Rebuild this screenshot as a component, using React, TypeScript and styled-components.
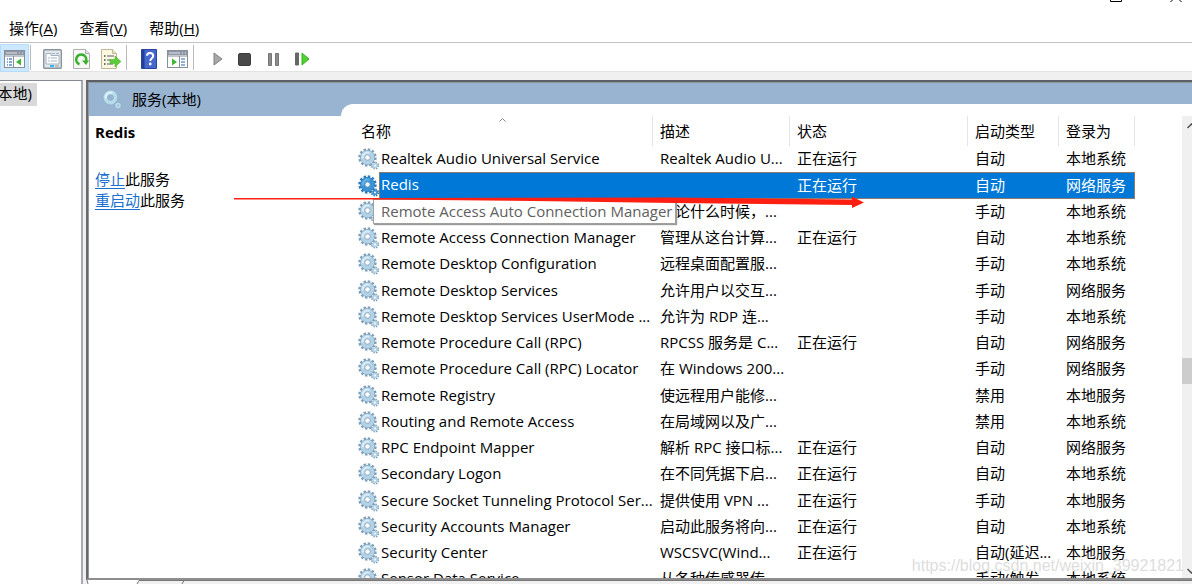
import React from "react";
import styled, { createGlobalStyle, css } from "styled-components";

const GlobalStyle = createGlobalStyle`
  * { box-sizing: border-box; }
  body {
    margin: 0;
    background: #fff;
    color: #000;
    font: 15px/20px "Open Sans", "Noto Sans CJK SC", sans-serif;
  }
  button { font: inherit; color: inherit; }
`;

const Window = styled.div`
  position: relative;
  display: flex;
  flex-direction: column;
  height: 100vh;
  overflow: hidden;
`;

const TitleBar = styled.header`
  display: flex;
  justify-content: flex-end;
  gap: 48px;
  height: 16px;
  padding-right: 10px;
  flex: none;
`;

const CaptionButton = styled.button`
  display: flex;
  padding: 0;
  border: 0;
  background: none;
  height: 3px;
`;

const MenuBar = styled.nav`
  display: flex;
  gap: 22px;
  height: 26px;
  padding: 0 9px 2px;
  flex: none;
`;

const MenuButton = styled.button`
  padding: 0;
  border: 0;
  background: none;
  white-space: nowrap;
`;

const Toolbar = styled.div`
  display: flex;
  flex: none;
  height: 30px;
  padding-top: 1px;
  border-top: 1px solid #c3c4c8;
  border-bottom: 1px solid #e3e3e3;
`;

const ToolButton = styled.button<{ $active?: boolean }>`
  display: flex;
  align-items: center;
  justify-content: center;
  width: 29px;
  height: 28px;
  padding: 2px 0 0;
  border: 1px solid ${(p) => (p.$active ? "#b5dcfa" : "transparent")};
  background: ${(p) => (p.$active ? "#cce8ff" : "transparent")};
`;

const Separator = styled.span`
  width: 1px;
  height: 25px;
  margin: 1px 7px 0 1px;
  background: #b9b9b9;
`;

const Body = styled.div`
  display: flex;
  flex: 1;
  min-height: 0;
  padding-top: 8px;
  background: #f0f0f0;
`;

const TreePane = styled.aside`
  flex: none;
  width: 83px;
  border-top: 1px solid #828790;
  border-right: 2px solid #a5aab3;
  background: #fff;
`;

const TreeNode = styled.div`
  width: 37px;
  height: 23px;
  margin-top: 2px;
  padding: 0 5px 0 0;
  background: #d9d9d9;
  display: flex;
  justify-content: flex-end;
  white-space: nowrap;
  overflow: hidden;
`;

const Main = styled.main`
  display: flex;
  flex-direction: column;
  flex: 1;
  min-width: 0;
  margin-left: 3px;
`;

const ResultPane = styled.div`
  display: flex;
  flex: 1;
  min-height: 0;
  border: solid #696969;
  border-width: 2px 0 2px 2px;
  border-top-color: #5c5f63;
  border-bottom-color: #8e8e8e;
  box-shadow: inset 1px 1px 0 #8f979f;
  padding: 1px 0 0 1px;
  background-color: #99b4d1;
`;

const DetailColumn = styled.section`
  display: flex;
  flex-direction: column;
  flex: none;
  width: 252px;
`;

const PaneTitle = styled.h1`
  display: flex;
  align-items: center;
  gap: 10px;
  height: 33px;
  margin: 0;
  padding: 0 0 2px 12px;
  font-size: 15px;
  font-weight: 400;
`;

const Details = styled.div`
  flex: 1;
  padding: 6px;
  background: #fff;
`;

const ServiceName = styled.h2`
  margin: 0 0 27px;
  font-size: 15px;
  line-height: 20px;
  font-weight: 700;
`;

const Action = styled.p`
  margin: 0;
  line-height: 21px;
  a { color: #1a6fd0; text-underline-offset: 3px; }
`;

const ListColumn = styled.section`
  display: flex;
  flex: 1;
  min-width: 0;
  margin-top: 21px;
  padding: 12px 0 0 12px;
  border-top-left-radius: 12px;
  background: #fff;
  overflow: hidden;
`;

const ListView = styled.div`
  flex: 1;
  min-width: 0;
  overflow: hidden;
`;

const Table = styled.table`
  width: 782px;
  table-layout: fixed;
  border-collapse: separate;
  border-spacing: 0;
  white-space: nowrap;
`;

const HeaderCell = styled.th`
  position: relative;
  height: 30px;
  padding: 0 0 0 7px;
  border-right: 1px solid #e5e5e5;
  font-weight: 400;
  text-align: left;
  &:first-child { padding-left: 8px; }
`;

const SortMark = styled.svg`
  position: absolute;
  top: 2px;
  left: calc(50% - 4px);
`;

const selectedFill = css`
  background: #0078d7;
  color: #fff;
  border: solid #8c7b6c;
  border-width: 1px 0;
`;

const Row = styled.tr`
  height: 26px;
  &:nth-child(4n + 2) { height: 27px; }
`;

const Cell = styled.td<{ $selected?: boolean }>`
  padding: 0 0 2px 7px;
  overflow: hidden;
  ${(p) => p.$selected && selectedFill}
  &:last-child { border-right-width: ${(p) => (p.$selected ? "1px" : "0")}; }
`;

const NameCell = styled.td`
  padding: 0 0 0 5px;
  overflow: hidden;
`;

const NameLine = styled.div`
  display: flex;
  align-items: center;
  height: 26px;
`;

const NameLabel = styled.span<{ $selected?: boolean }>`
  flex: 1;
  height: 100%;
  padding-left: 2px;
  line-height: 24px;
  ${(p) => p.$selected && selectedFill}
  ${(p) => p.$selected && css`
    height: 27px;
    line-height: 23px;
    padding-left: 1px;
    border-left-width: 1px;
  `}
`;

const ScrollBar = styled.div`
  display: flex;
  flex-direction: column;
  flex: none;
  width: 10px;
  background: #f0f0f0;
  overflow: hidden;
`;

const ScrollButton = styled.button`
  display: flex;
  height: 17px;
  padding: 7px 0 0 5px;
  border: 0;
  background: none;
`;

const ScrollTrack = styled.div`
  display: flex;
  flex-direction: column;
  flex: 1;
  &::before { content: ""; flex: 224; }
  &::after { content: ""; flex: 177; }
`;

const ScrollThumb = styled.div`
  height: 26px;
  background: #cdcdcd;
`;

const BottomTabs = styled.svg`
  display: block;
  flex: none;
  width: 100%;
  height: 4px;
`;

const Tooltip = styled.div`
  position: absolute;
  left: 373px;
  top: 199px;
  height: 25px;
  padding: 0 3px 0 7px;
  border: 1px solid #a0a0a0;
  background: #fff;
  box-shadow: 1px 1px 1px #9a9a9a;
  color: #606060;
  line-height: 22px;
  white-space: nowrap;
`;

const Arrow = styled.svg`
  position: absolute;
  left: 233px;
  top: 194px;
`;

const Watermark = styled.div`
  position: absolute;
  right: 8px;
  bottom: 8px;
  color: rgba(185, 185, 185, 0.5);
  font: 16px/20px "Liberation Sans", sans-serif;
`;

const GearIcon = ({ tone = "normal" }: { tone?: "normal" | "selected" | "title" }) => {
  const c = {
    normal: { edge: "#7f9fb9", body: "#b2d3e7", hi: "#d9ecf6", hole: "#fff" },
    selected: { edge: "#2b7ab8", body: "#3c93d4", hi: "#64b1e6", hole: "#e8f4fc" },
    title: { edge: "#8fb3cc", body: "#b9dcec", hi: "#def2f8", hole: "#99b4d1" },
  }[tone];
  return (
    <svg width="21" height="22" viewBox="0 0 21 22" style={{ flex: "none" }} aria-hidden="true">
      <circle cx="9.5" cy="9.5" r="7.8" fill="none" stroke={c.edge} strokeWidth="2.800" strokeDasharray="2.400 1.684" opacity={tone === "title" ? 0.25 : 1} />
      <circle cx="9.5" cy="9.5" r="5.200" fill="none" stroke={c.edge} strokeWidth="4.400" opacity={tone === "title" ? 0.5 : 1} />
      <circle cx="9.5" cy="9.5" r="5" fill="none" stroke={c.body} strokeWidth="3.800" />
      <path d="M4.900 10.500A4.800 4.800 0 0 1 11.500 5" fill="none" stroke={c.hi} strokeWidth="2" />
      <circle cx="9.5" cy="9.5" r="2.700" fill={c.hole} stroke={c.edge} strokeWidth=".8" />
      <circle cx="17" cy="17.500" r="3.100" fill="none" stroke={c.edge} strokeWidth="2" strokeDasharray="1.400 1.035" />
      <circle cx="17" cy="17.500" r="1.900" fill={c.hole} stroke={c.body} strokeWidth="1.800" />
    </svg>
  );
};

const PanelIcon = ({ mirrored }: { mirrored?: boolean }) => (
  <svg width="21" height="18" viewBox="0 0 21 18" aria-hidden="true">
    <rect x=".5" y=".5" width="20" height="17" fill="#fff" stroke="#858e99" />
    <path d="M1 1h19v4H1z" fill="#8f98a4" />
    <path d="M2 3h11M15 3h1M18 3h1" stroke="#dfe3e8" />
    <path d="M1 6h19" stroke="#858e99" />
    {mirrored ? (
      <>
        <path d="M12.500 6v11" stroke="#858e99" />
        <path d="M14 9h4M14 12h4M14 15h4" stroke="#6f9bcb" strokeWidth="1.400" />
        <path d="M5 8.500v7l5-3.500z" fill="#3eb536" />
      </>
    ) : (
      <>
        <path d="M9.500 6v11" stroke="#858e99" />
        <path d="M3 9h1M5 9h3M3 12h1M5 12h3M3 15h1M5 15h3" stroke="#5189c8" strokeWidth="1.400" />
        <path d="M17 8.500v7l-5-3.500z" fill="#3eb536" />
      </>
    )}
  </svg>
);

const PropertiesIcon = () => (
  <svg width="19" height="20" viewBox="0 0 19 20" aria-hidden="true">
    <rect x=".7" y=".7" width="17.600" height="18.600" rx="1" fill="#e3e8ed" stroke="#8b949d" strokeWidth="1.400" />
    <path d="M3 15V4.500h5v2h8V15z" fill="#fff" stroke="#a5b1be" />
    <path d="M9 4.500h3M13 4.500h3" stroke="#a5b1be" />
    <path d="M5 9h2M8 9h6M5 12h2M8 12h6" stroke="#a3b2c3" />
    <path d="M7 17h4" stroke="#35b5e8" strokeWidth="2" />
    <path d="M12 17h4" stroke="#b7c0c8" strokeWidth="2" />
  </svg>
);

const RefreshIcon = () => (
  <svg width="17" height="20" viewBox="0 0 17 20" aria-hidden="true">
    <path d="M.5.5h12l4 4v15H.5z" fill="#f7f7f5" stroke="#b0b0b0" />
    <path d="M12.500.5v4h4" fill="#e4e4e4" stroke="#b0b0b0" />
    <path d="M6.500 15.200A5 5 0 1 1 13 12" fill="none" stroke="#37b02e" strokeWidth="2.600" />
    <path d="M9 11.500h7l-3 4.500z" fill="#37b02e" />
  </svg>
);

const ExportIcon = () => (
  <svg width="20" height="20" viewBox="0 0 20 20" aria-hidden="true">
    <path d="M.5.5h11l4 4v15H.5z" fill="#fcf8e0" stroke="#bdb79c" />
    <path d="M11.500.5v4h4" fill="#eee5bd" stroke="#bdb79c" />
    <path d="M3 7h1.500M3 11h1.500M3 15h1.500" stroke="#444" strokeWidth="1.500" />
    <path d="M6 7h7M6 11h4M6 15h6" stroke="#8f8c9c" strokeWidth="1.300" />
    <path d="M9 10.500h5V7l6 5.500-6 5.500v-3.500H9z" fill="#5fcb3c" stroke="#4db336" strokeWidth=".6" />
  </svg>
);

const HelpIcon = () => (
  <svg width="16" height="20" viewBox="0 0 16 20" aria-hidden="true">
    <path d="M.5.5h15v19H.5z" fill="#4668cc" stroke="#29459c" />
    <path d="M1 1h2.500v18H1z" fill="#243f9a" />
    <path d="M6 6.800C6 4.800 7.200 4 9 4s3.200 1 3.200 2.900c0 2.300-2.900 2.500-2.900 5" fill="none" stroke="#fff" strokeWidth="2" />
    <circle cx="9.200" cy="15" r="1.400" fill="#fff" />
  </svg>
);

const PlayIcon = () => (
  <svg width="10" height="14" viewBox="0 0 10 14" style={{ marginLeft: 4 }} aria-hidden="true">
    <path d="M1 1l8 6-8 6z" fill="#a8a8a8" stroke="#808080" />
  </svg>
);
const StopIcon = () => (
  <svg width="13" height="13" viewBox="0 0 13 13" aria-hidden="true">
    <rect x=".5" y=".5" width="12" height="12" rx="1.500" fill="#4a4a4a" stroke="#3d3d3d" />
  </svg>
);
const PauseIcon = () => (
  <svg width="11" height="13" viewBox="0 0 11 13" aria-hidden="true">
    <path d="M.5.5h3v12h-3zM7.500.5h3v12h-3z" fill="#8c8c8c" stroke="#757575" />
  </svg>
);
const RestartIcon = () => (
  <svg width="15" height="14" viewBox="0 0 15 14" aria-hidden="true">
    <path d="M.5 1h3v12h-3z" fill="#666" stroke="#666" />
    <path d="M7 1l7 6-7 6z" fill="#4fd32f" stroke="#3bac2a" />
  </svg>
);

const menus = [
  ["操作", "A"],
  ["查看", "V"],
  ["帮助", "H"],
];

const columns = [
  { title: "名称", width: 300 },
  { title: "描述", width: 137 },
  { title: "状态", width: 178 },
  { title: "启动类型", width: 91 },
  { title: "登录为", width: 76 },
];

const RUN = "正在运行";
const AUTO = "自动";
const MANUAL = "手动";
const OFF = "禁用";
const SYS = "本地系统";
const NET = "网络服务";
const LOCAL = "本地服务";

const services: string[][] = [
  ["Realtek Audio Universal Service", "Realtek Audio U...", RUN, AUTO, SYS],
  ["Redis", "", RUN, AUTO, NET],
  ["Remote Access Auto Connection Manager", "无论什么时候，...", "", MANUAL, SYS],
  ["Remote Access Connection Manager", "管理从这台计算...", RUN, AUTO, SYS],
  ["Remote Desktop Configuration", "远程桌面配置服...", "", MANUAL, SYS],
  ["Remote Desktop Services", "允许用户以交互...", "", MANUAL, NET],
  ["Remote Desktop Services UserMode ...", "允许为 RDP 连...", "", MANUAL, SYS],
  ["Remote Procedure Call (RPC)", "RPCSS 服务是 C...", RUN, AUTO, NET],
  ["Remote Procedure Call (RPC) Locator", "在 Windows 200...", "", MANUAL, NET],
  ["Remote Registry", "使远程用户能修...", "", OFF, LOCAL],
  ["Routing and Remote Access", "在局域网以及广...", "", OFF, SYS],
  ["RPC Endpoint Mapper", "解析 RPC 接口标...", RUN, AUTO, NET],
  ["Secondary Logon", "在不同凭据下启...", RUN, AUTO, SYS],
  ["Secure Socket Tunneling Protocol Ser...", "提供使用 VPN ...", RUN, MANUAL, LOCAL],
  ["Security Accounts Manager", "启动此服务将向...", RUN, AUTO, SYS],
  ["Security Center", "WSCSVC(Wind...", RUN, "自动(延迟...", LOCAL],
  ["Sensor Data Service", "从各种传感器传...", "", "手动(触发...", SYS],
];

export default function App() {
  return (
    <Window>
      <GlobalStyle />
      <TitleBar>
        <CaptionButton aria-label="最大化">
          <svg width="12" height="2" viewBox="0 0 12 2"><path d="M.5 0v1.500h11V0" fill="none" stroke="#000" /></svg>
        </CaptionButton>
        <CaptionButton aria-label="关闭">
          <svg width="12" height="2" viewBox="0 0 12 2"><path d="M2.500 0l-2 2M9.500 0l2 2" fill="none" stroke="#000" /></svg>
        </CaptionButton>
      </TitleBar>
      <MenuBar>
        {menus.map(([label, key]) => (
          <MenuButton key={key}>{label}(<u>{key}</u>)</MenuButton>
        ))}
      </MenuBar>
      <Toolbar>
        <ToolButton $active aria-label="显示/隐藏控制台树"><PanelIcon /></ToolButton>
        <Separator />
        <ToolButton aria-label="属性"><PropertiesIcon /></ToolButton>
        <ToolButton aria-label="刷新"><RefreshIcon /></ToolButton>
        <ToolButton aria-label="导出列表"><ExportIcon /></ToolButton>
        <Separator />
        <ToolButton aria-label="帮助"><HelpIcon /></ToolButton>
        <ToolButton aria-label="显示/隐藏操作窗格"><PanelIcon mirrored /></ToolButton>
        <Separator />
        <ToolButton aria-label="启动服务"><PlayIcon /></ToolButton>
        <ToolButton aria-label="停止服务"><StopIcon /></ToolButton>
        <ToolButton aria-label="暂停服务"><PauseIcon /></ToolButton>
        <ToolButton aria-label="重启动服务"><RestartIcon /></ToolButton>
      </Toolbar>
      <Body>
        <TreePane><TreeNode>本地)</TreeNode></TreePane>
        <Main>
          <ResultPane>
            <DetailColumn>
              <PaneTitle><GearIcon tone="title" />服务(本地)</PaneTitle>
              <Details>
                <ServiceName>Redis</ServiceName>
                <Action><a href="#stop">停止</a>此服务</Action>
                <Action><a href="#restart">重启动</a>此服务</Action>
              </Details>
            </DetailColumn>
            <ListColumn>
              <ListView>
                <Table>
                  <colgroup>
                    {columns.map((c) => <col key={c.title} width={c.width} />)}
                  </colgroup>
                  <thead>
                    <tr>
                      {columns.map((c, i) => (
                        <HeaderCell key={c.title} scope="col">
                          {c.title}
                          {i === 0 && (
                            <SortMark width="7" height="4" viewBox="0 0 7 4">
                              <path d="M.5 3.500l3-3 3 3" fill="none" stroke="#888" />
                            </SortMark>
                          )}
                        </HeaderCell>
                      ))}
                    </tr>
                  </thead>
                  <tbody>
                    {services.map(([name, ...rest]) => {
                      const selected = name === "Redis";
                      return (
                        <Row key={name} aria-selected={selected}>
                          <NameCell>
                            <NameLine>
                              <GearIcon tone={selected ? "selected" : "normal"} />
                              <NameLabel $selected={selected}>{name}</NameLabel>
                            </NameLine>
                          </NameCell>
                          {rest.map((text, i) => (
                            <Cell key={i} $selected={selected}>{text}</Cell>
                          ))}
                        </Row>
                      );
                    })}
                  </tbody>
                </Table>
              </ListView>
              <ScrollBar>
                <ScrollButton aria-label="向上滚动">
                  <svg width="9" height="6" viewBox="0 0 9 6" style={{ flex: "none" }}><path d="M.5 5l4-4 4 4" fill="none" stroke="#505050" strokeWidth="1.500" /></svg>
                </ScrollButton>
                <ScrollTrack><ScrollThumb /></ScrollTrack>
                <ScrollButton aria-label="向下滚动">
                  <svg width="9" height="6" viewBox="0 0 9 6" style={{ flex: "none" }}><path d="M.5 1l4 4 4-4" fill="none" stroke="#505050" strokeWidth="1.500" /></svg>
                </ScrollButton>
              </ScrollBar>
            </ListColumn>
          </ResultPane>
          <BottomTabs aria-hidden="true">
            <path d="M1 0h52l-2 4H2z" fill="#fff" />
            <path d="M1 0l1 4M51 4l2-3.500H98L96 4M98 .5H4000" fill="none" stroke="#777" />
          </BottomTabs>
        </Main>
      </Body>
      <Tooltip role="tooltip">Remote Access Auto Connection Manager</Tooltip>
      <Arrow width="632" height="15" viewBox="0 0 632 15" aria-hidden="true">
        <path d="M1 4L150 4L440 3.500L619 5.500L619 2.500L631 8.500L619 14L619 11L440 9L300 7L150 5.500L1 5.500Z" fill="#fd2012" />
      </Arrow>
      <Watermark>https://blog.csdn.net/weixin_39921821</Watermark>
    </Window>
  );
}
